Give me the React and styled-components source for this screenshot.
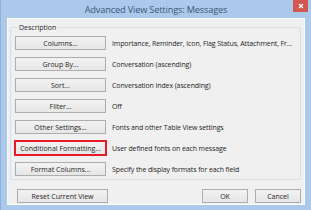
import React from "react";
import styled, { createGlobalStyle } from "styled-components";

const Global = createGlobalStyle`
  html, body { margin: 0; padding: 0; }
  body {
    width: 311px;
    height: 210px;
    overflow: hidden;
    font-family: "Open Sans", "Noto Sans", sans-serif;
  }
`;

const Window = styled.div`
  width: 311px;
  height: 210px;
  box-sizing: border-box;
  background: #abc9eb;
  border-left: 1px solid #8eb0d6;
  display: flex;
  flex-direction: column;
  padding: 0 6px 5px 6px;
`;

const TitleBar = styled.div`
  height: 18px;
  flex-shrink: 0;
  position: relative;
  display: flex;
  align-items: center;
  justify-content: center;
`;

const Title = styled.div`
  font-size: 9.2px;
  color: #3d5878;
  letter-spacing: -0.15px;
`;

const Close = styled.div`
  position: absolute;
  right: -3px;
  top: 0;
  width: 15px;
  height: 12px;
  background: #d4574f;
  display: flex;
  align-items: center;
  justify-content: center;
`;

const Content = styled.div`
  flex: 1;
  background: #f0f0f0;
  border: 1px solid #fbfbfb;
  display: flex;
  flex-direction: column;
  padding: 0 3px 0 2px;
`;

const Group = styled.fieldset`
  margin: 4px 0 0 0;
  padding: 4px 0 3px 4px;
  border: 1px solid #d5dfe5;
  border-radius: 2px;
  display: flex;
  flex-direction: column;
  gap: 7px;
`;

const Legend = styled.legend`
  font-size: 7px;
  color: #1e1e1e;
  padding: 0 1px;
  margin-left: 3px;
`;

const Row = styled.div`
  display: flex;
  align-items: center;
  gap: 6px;
`;

const Button = styled.div`
  box-sizing: border-box;
  width: ${(p) => p.$w || 91}px;
  height: 14px;
  flex-shrink: 0;
  border: 1px solid ${(p) => (p.$hot ? "#e41c24" : "#adadad")};
  box-shadow: ${(p) => (p.$hot ? "0 0 0 1px #e41c24" : "none")};
  background: linear-gradient(#f2f2f2, #e6e6e6);
  font-size: 7px;
  color: #262626;
  display: flex;
  align-items: center;
  justify-content: center;
  white-space: nowrap;
`;

const Desc = styled.div`
  font-size: 7px;
  color: #1e1e1e;
  letter-spacing: -0.12px;
  white-space: nowrap;
`;

const Footer = styled.div`
  display: flex;
  align-items: center;
  gap: 7px;
  margin-top: 9px;
  padding-left: 7px;
`;

const Spacer = styled.div`
  flex: 1;
`;

const rows = [
  ["Columns...", "Importance, Reminder, Icon, Flag Status, Attachment, Fr..."],
  ["Group By...", "Conversation (ascending)"],
  ["Sort...", "Conversation Index (ascending)"],
  ["Filter...", "Off"],
  ["Other Settings...", "Fonts and other Table View settings"],
  ["Conditional Formatting...", "User defined fonts on each message", true],
  ["Format Columns...", "Specify the display formats for each field"],
];

export default function App() {
  return (
    <>
      <Global />
      <Window>
        <TitleBar>
          <Title>Advanced View Settings: Messages</Title>
          <Close>
            <svg width="6" height="6" viewBox="0 0 6 6">
              <path d="M1 1L5 5M5 1L1 5" stroke="#fff" strokeWidth="1.3" />
            </svg>
          </Close>
        </TitleBar>
        <Content>
          <Group>
            <Legend>Description</Legend>
            {rows.map(([label, text, hot]) => (
              <Row key={label}>
                <Button $hot={hot}>{label}</Button>
                <Desc>{text}</Desc>
              </Row>
            ))}
          </Group>
          <Footer>
            <Button>Reset Current View</Button>
            <Spacer />
            <Button $w={46}>OK</Button>
            <Button $w={46}>Cancel</Button>
          </Footer>
        </Content>
      </Window>
    </>
  );
}
